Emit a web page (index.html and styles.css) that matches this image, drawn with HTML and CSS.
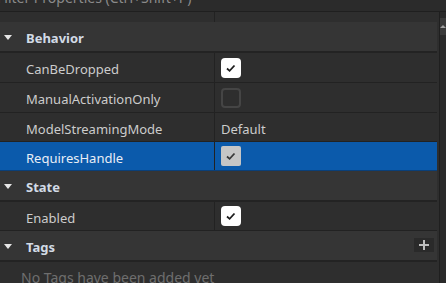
FILE: index.html
```html
<!DOCTYPE html>
<html>
<head>
<meta charset="utf-8">
<link rel="stylesheet" href="styles.css">
</head>
<body>
<div class="filter"><span class="filter-text">Filter Properties (Ctrl+Shift+P)</span></div>
<div class="main">
  <div class="list">
    <div class="row partial"><div class="name"></div><div class="value"></div></div>
    <div class="header"><span class="tri"></span><span class="htext">Behavior</span></div>
    <div class="row tall"><div class="name">CanBeDropped</div><div class="value"><span class="cb on"><svg viewBox="0 0 20 20" width="20" height="20"><path d="M6 10.5 L8.6 12.8 L13.5 7.5" fill="none" stroke="#1e1e1e" stroke-width="1.8"/></svg></span></div></div>
    <div class="row tall"><div class="name">ManualActivationOnly</div><div class="value"><span class="cb off"></span></div></div>
    <div class="row"><div class="name">ModelStreamingMode</div><div class="value"><span class="vtext">Default</span></div></div>
    <div class="row selected"><div class="name">RequiresHandle</div><div class="value"><span class="cb dim"><svg viewBox="0 0 20 20" width="20" height="20"><path d="M6 10.5 L8.6 12.8 L13.5 7.5" fill="none" stroke="#3a3a3a" stroke-width="1.8"/></svg></span></div></div>
    <div class="header"><span class="tri"></span><span class="htext">State</span></div>
    <div class="row"><div class="name">Enabled</div><div class="value"><span class="cb on"><svg viewBox="0 0 20 20" width="20" height="20"><path d="M6 10.5 L8.6 12.8 L13.5 7.5" fill="none" stroke="#1e1e1e" stroke-width="1.8"/></svg></span></div></div>
    <div class="header"><span class="tri"></span><span class="htext">Tags</span><span class="add"><svg viewBox="0 0 20 14" width="20" height="14"><path d="M5 7 H15 M10 2 V12" stroke="#bdbdbd" stroke-width="2"/></svg></span></div>
    <div class="empty">No Tags have been added yet</div>
  </div>
  <div class="scrollbar"><div class="sbtn"><span class="arrow"></span></div></div>
</div>
</body>
</html>
```
FILE: styles.css
```css
html, body {
  margin: 0;
  padding: 0;
  background: #2e2e2e;
  overflow: hidden;
}
body {
  width: 446px;
  height: 283px;
  font-family: "Noto Sans", "Open Sans", sans-serif;
  font-size: 13px;
}
.filter {
  background: #2b2b2b;
  border-bottom: 1px solid #1f1f1f;
  overflow: hidden;
  box-sizing: border-box;
  height: 12px;
}
.filter-text {
  display: block;
  margin-top: -12px;
  margin-left: -3px;
  color: #8a8a8a;
  font-size: 14px;
  line-height: 20px;
  white-space: nowrap;
}
.main {
  display: flex;
  height: 271px;
}
.list {
  width: 437px;
  display: flex;
  flex-direction: column;
}
.scrollbar {
  width: 7px;
  margin-left: 2px;
  background: #2a2a2a;
  border-left: 1px solid #1f1f1f;
  box-sizing: border-box;
  padding-top: 6px;
}
.sbtn {
  height: 17px;
  background: #3a3a3a;
  display: flex;
  align-items: center;
  justify-content: center;
}
.arrow {
  width: 0;
  height: 0;
  border-left: 3px solid transparent;
  border-right: 3px solid transparent;
  border-bottom: 3px solid #a0a0a0;
}
.row {
  display: flex;
  flex-shrink: 0;
  height: 29px;
  box-sizing: border-box;
  border-bottom: 1px solid #222222;
  background: #2e2e2e;
  color: #cccccc;
}
.row.tall {
  height: 30px;
}
.row.partial {
  height: 10px;
  border-bottom: none;
}
.name {
  width: 215px;
  box-sizing: border-box;
  border-right: 1px solid #222222;
  padding-left: 26px;
  display: flex;
  align-items: center;
  padding-top: 3px;
  white-space: nowrap;
}
.value {
  flex: 1;
  display: flex;
  align-items: center;
  padding-left: 6px;
}
.vtext {
  padding-top: 3px;
  color: #cccccc;
}
.row.selected {
  background: #0b5aab;
  border-bottom: 1px solid #0a3f78;
  color: #e8eef6;
}
.cb {
  width: 20px;
  height: 20px;
  box-sizing: border-box;
  border-radius: 4px;
  display: block;
}
.cb svg { display: block; }
.cb.on {
  background: #ffffff;
}
.cb.off {
  border: 2px solid #454545;
}
.cb.dim {
  background: #c6c6c6;
  border-radius: 2px;
}
.header {
  flex-shrink: 0;
  height: 31px;
  box-sizing: border-box;
  background: #353535;
  border-bottom: 2px solid #232323;
  display: flex;
  align-items: center;
  padding-left: 4px;
  padding-right: 3px;
}
.tri {
  width: 0;
  height: 0;
  border-left: 4px solid transparent;
  border-right: 4px solid transparent;
  border-top: 5px solid #e6e6e6;
  margin-top: 1px;
}
.htext {
  margin-left: 14px;
  font-weight: bold;
  color: #d2dbe6;
  padding-top: 3px;
}
.add {
  margin-left: auto;
  width: 20px;
  height: 14px;
  background: #2a2a2a;
  display: block;
  margin-top: -2px;
}
.add svg { display: block; }
.empty {
  padding-left: 21px;
  padding-top: 6px;
  color: #6e6e6e;
  font-size: 14px;
  white-space: nowrap;
}
```
